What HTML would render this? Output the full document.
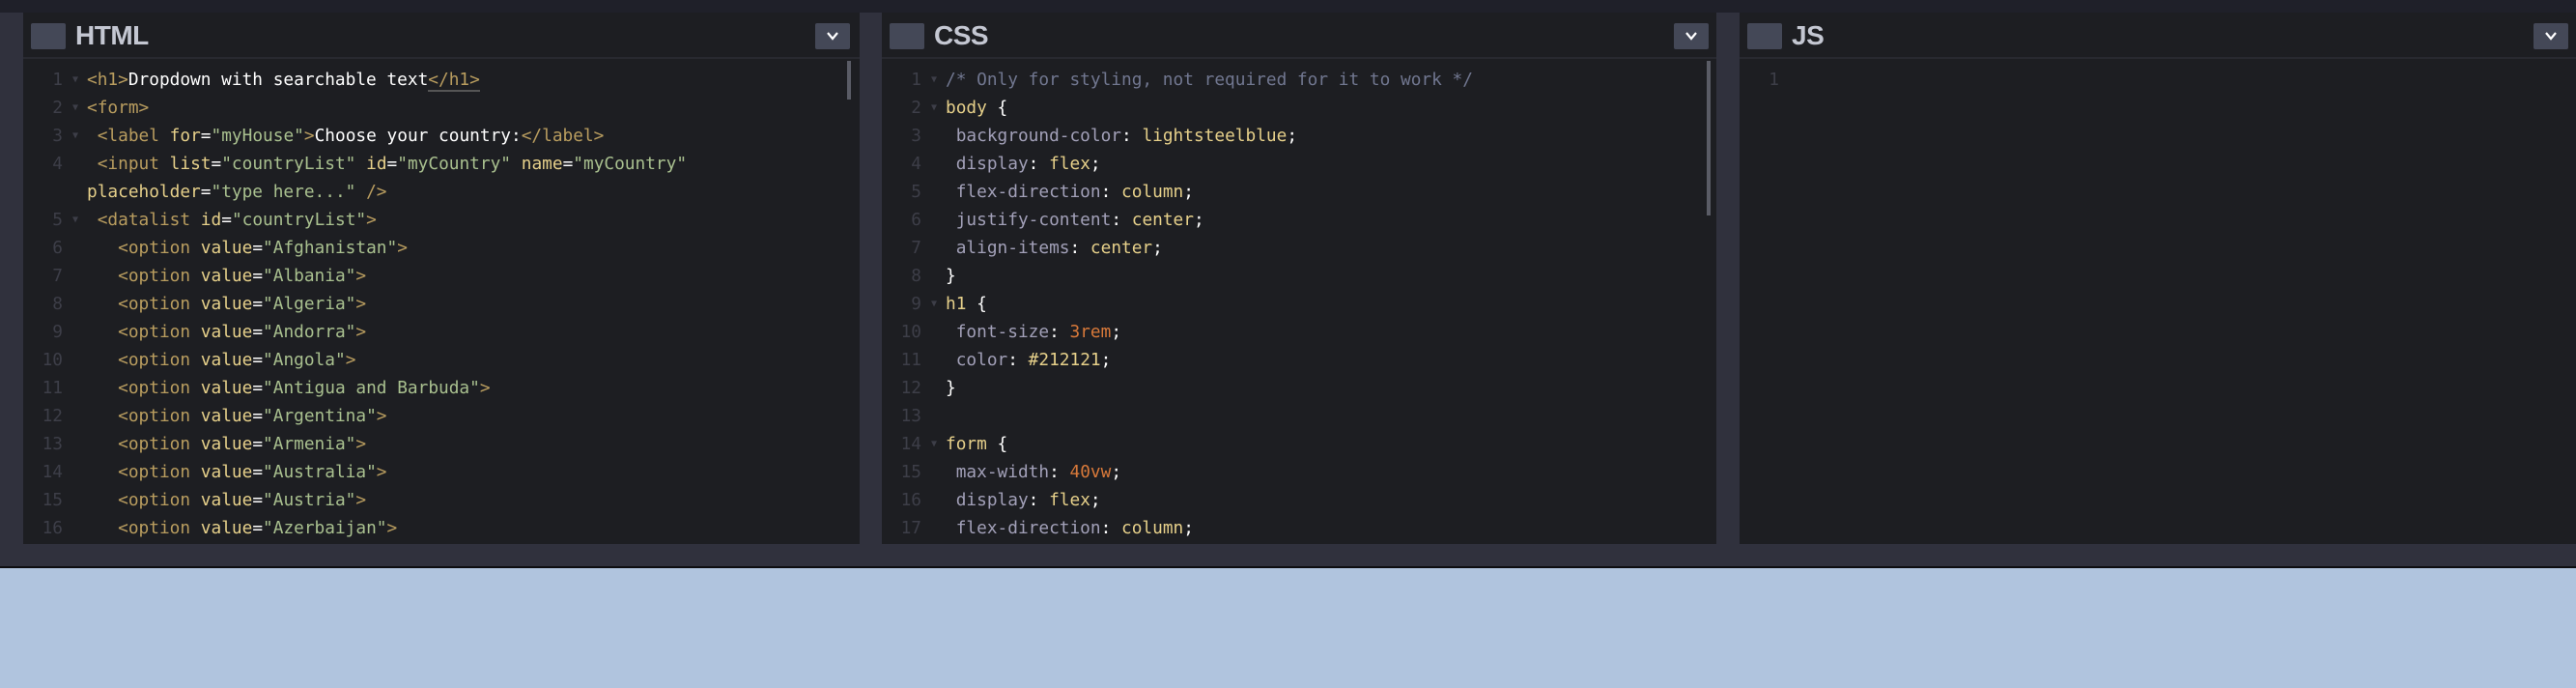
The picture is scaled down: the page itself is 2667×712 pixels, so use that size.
<!DOCTYPE html>
<html><head><meta charset="utf-8">
<style>
*{margin:0;padding:0;box-sizing:border-box}
body{width:2667px;height:712px;background:#b0c4de;position:relative;overflow:hidden;font-family:"Liberation Sans",sans-serif}
.top{position:absolute;left:0;top:0;width:2667px;height:13px;background:#1f2029}
.wrap{position:absolute;left:0;top:13px;width:2667px;height:550px;background:#30313d}
.panel{position:absolute;top:13px;height:550px;background:#1d1e22;overflow:hidden}
.hdr{position:absolute;left:0;top:0;right:0;height:48px;border-bottom:2px solid #282930}
.ico{position:absolute;left:8px;top:11px;width:36px;height:27px;background:#444857;border-radius:2px}
.ttl{position:absolute;left:54px;top:8px;font-size:28px;font-weight:bold;color:#c4c7d2;letter-spacing:-0.5px}
.btn{position:absolute;top:11px;width:36px;height:27px;background:#444857;border-radius:2px}
.btn svg{position:absolute;left:11px;top:8px}
.code{position:absolute;left:0;top:55px;right:0;font-family:"DejaVu Sans Mono","Liberation Mono",monospace;font-size:17.8px;line-height:29px;white-space:pre;color:#fff}
.ln{position:absolute;left:0;width:41px;text-align:right;color:#3d3e48}
.ar{position:absolute;left:51px;color:#3d3e48;font-size:10px}
.tx{position:absolute;left:66px}
.sb{position:absolute;width:4px;background:#5a5c66;top:50px}
.t{color:#b99d5f}.a{color:#e6d08a}.s{color:#a9c08f}.c{color:#717790}.p{color:#a2a0b8}.v{color:#e6d08a}.n{color:#d8793a}
.bot{position:absolute;left:0;top:563px;width:2667px;height:23px;background:#30313d}
.bl{position:absolute;left:0;top:586px;width:2667px;height:2px;background:#0d0d10}
</style></head><body>
<div class="top"></div>
<div class="wrap"></div>

<div class="panel" style="left:24px;width:866px">
 <div class="hdr"><div class="ico"></div><div class="ttl">HTML</div><div class="btn" style="left:820px"><svg width="14" height="10" viewBox="0 0 14 10"><path d="M2 2 L7 8 L12 2" stroke="#fff" stroke-width="2.2" fill="none"/></svg></div></div>
 <div class="sb" style="left:853px;height:40px"></div>
 <div class="code">
<div class="ln" style="top:0">1</div><div class="ar" style="top:0">▼</div><div class="tx" style="top:0"><span class="t">&lt;h1&gt;</span>Dropdown with searchable text<span class="t" style="border-bottom:2px solid #555">&lt;/h1&gt;</span></div>
<div class="ln" style="top:29px">2</div><div class="ar" style="top:29px">▼</div><div class="tx" style="top:29px"><span class="t">&lt;form&gt;</span></div>
<div class="ln" style="top:58px">3</div><div class="ar" style="top:58px">▼</div><div class="tx" style="top:58px"> <span class="t">&lt;label</span> <span class="a">for</span>=<span class="s">"myHouse"</span><span class="t">&gt;</span>Choose your country:<span class="t">&lt;/label&gt;</span></div>
<div class="ln" style="top:87px">4</div><div class="tx" style="top:87px"> <span class="t">&lt;input</span> <span class="a">list</span>=<span class="s">"countryList"</span> <span class="a">id</span>=<span class="s">"myCountry"</span> <span class="a">name</span>=<span class="s">"myCountry"</span></div>
<div class="tx" style="top:116px"><span class="a">placeholder</span>=<span class="s">"type here..."</span> <span class="t">/&gt;</span></div>
<div class="ln" style="top:145px">5</div><div class="ar" style="top:145px">▼</div><div class="tx" style="top:145px"> <span class="t">&lt;datalist</span> <span class="a">id</span>=<span class="s">"countryList"</span><span class="t">&gt;</span></div>
<div class="ln" style="top:174px">6</div><div class="tx" style="top:174px">   <span class="t">&lt;option</span> <span class="a">value</span>=<span class="s">"Afghanistan"</span><span class="t">&gt;</span></div>
<div class="ln" style="top:203px">7</div><div class="tx" style="top:203px">   <span class="t">&lt;option</span> <span class="a">value</span>=<span class="s">"Albania"</span><span class="t">&gt;</span></div>
<div class="ln" style="top:232px">8</div><div class="tx" style="top:232px">   <span class="t">&lt;option</span> <span class="a">value</span>=<span class="s">"Algeria"</span><span class="t">&gt;</span></div>
<div class="ln" style="top:261px">9</div><div class="tx" style="top:261px">   <span class="t">&lt;option</span> <span class="a">value</span>=<span class="s">"Andorra"</span><span class="t">&gt;</span></div>
<div class="ln" style="top:290px">10</div><div class="tx" style="top:290px">   <span class="t">&lt;option</span> <span class="a">value</span>=<span class="s">"Angola"</span><span class="t">&gt;</span></div>
<div class="ln" style="top:319px">11</div><div class="tx" style="top:319px">   <span class="t">&lt;option</span> <span class="a">value</span>=<span class="s">"Antigua and Barbuda"</span><span class="t">&gt;</span></div>
<div class="ln" style="top:348px">12</div><div class="tx" style="top:348px">   <span class="t">&lt;option</span> <span class="a">value</span>=<span class="s">"Argentina"</span><span class="t">&gt;</span></div>
<div class="ln" style="top:377px">13</div><div class="tx" style="top:377px">   <span class="t">&lt;option</span> <span class="a">value</span>=<span class="s">"Armenia"</span><span class="t">&gt;</span></div>
<div class="ln" style="top:406px">14</div><div class="tx" style="top:406px">   <span class="t">&lt;option</span> <span class="a">value</span>=<span class="s">"Australia"</span><span class="t">&gt;</span></div>
<div class="ln" style="top:435px">15</div><div class="tx" style="top:435px">   <span class="t">&lt;option</span> <span class="a">value</span>=<span class="s">"Austria"</span><span class="t">&gt;</span></div>
<div class="ln" style="top:464px">16</div><div class="tx" style="top:464px">   <span class="t">&lt;option</span> <span class="a">value</span>=<span class="s">"Azerbaijan"</span><span class="t">&gt;</span></div>
 </div>
</div>

<div class="panel" style="left:913px;width:864px">
 <div class="hdr"><div class="ico"></div><div class="ttl">CSS</div><div class="btn" style="left:820px"><svg width="14" height="10" viewBox="0 0 14 10"><path d="M2 2 L7 8 L12 2" stroke="#fff" stroke-width="2.2" fill="none"/></svg></div></div>
 <div class="sb" style="left:854px;height:160px"></div>
 <div class="code">
<div class="ln" style="top:0">1</div><div class="ar" style="top:0">▼</div><div class="tx" style="top:0"><span class="c">/* Only for styling, not required for it to work */</span></div>
<div class="ln" style="top:29px">2</div><div class="ar" style="top:29px">▼</div><div class="tx" style="top:29px"><span class="v">body</span> {</div>
<div class="ln" style="top:58px">3</div><div class="tx" style="top:58px"> <span class="p">background-color</span>: <span class="v">lightsteelblue</span>;</div>
<div class="ln" style="top:87px">4</div><div class="tx" style="top:87px"> <span class="p">display</span>: <span class="v">flex</span>;</div>
<div class="ln" style="top:116px">5</div><div class="tx" style="top:116px"> <span class="p">flex-direction</span>: <span class="v">column</span>;</div>
<div class="ln" style="top:145px">6</div><div class="tx" style="top:145px"> <span class="p">justify-content</span>: <span class="v">center</span>;</div>
<div class="ln" style="top:174px">7</div><div class="tx" style="top:174px"> <span class="p">align-items</span>: <span class="v">center</span>;</div>
<div class="ln" style="top:203px">8</div><div class="tx" style="top:203px">}</div>
<div class="ln" style="top:232px">9</div><div class="ar" style="top:232px">▼</div><div class="tx" style="top:232px"><span class="v">h1</span> {</div>
<div class="ln" style="top:261px">10</div><div class="tx" style="top:261px"> <span class="p">font-size</span>: <span class="n">3rem</span>;</div>
<div class="ln" style="top:290px">11</div><div class="tx" style="top:290px"> <span class="p">color</span>: <span class="v">#212121</span>;</div>
<div class="ln" style="top:319px">12</div><div class="tx" style="top:319px">}</div>
<div class="ln" style="top:348px">13</div>
<div class="ln" style="top:377px">14</div><div class="ar" style="top:377px">▼</div><div class="tx" style="top:377px"><span class="v">form</span> {</div>
<div class="ln" style="top:406px">15</div><div class="tx" style="top:406px"> <span class="p">max-width</span>: <span class="n">40vw</span>;</div>
<div class="ln" style="top:435px">16</div><div class="tx" style="top:435px"> <span class="p">display</span>: <span class="v">flex</span>;</div>
<div class="ln" style="top:464px">17</div><div class="tx" style="top:464px"> <span class="p">flex-direction</span>: <span class="v">column</span>;</div>
 </div>
</div>

<div class="panel" style="left:1801px;width:866px">
 <div class="hdr"><div class="ico"></div><div class="ttl">JS</div><div class="btn" style="left:822px"><svg width="14" height="10" viewBox="0 0 14 10"><path d="M2 2 L7 8 L12 2" stroke="#fff" stroke-width="2.2" fill="none"/></svg></div></div>
 <div class="code"><div class="ln" style="top:0">1</div></div>
</div>

<div class="bot"></div>
<div class="bl"></div>
</body></html>
